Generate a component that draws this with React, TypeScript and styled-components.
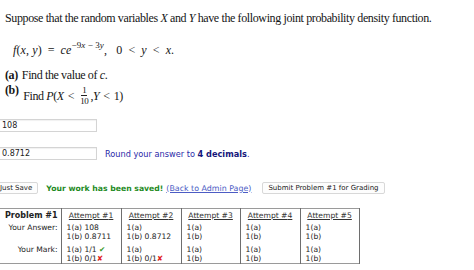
import React from 'react';
import styled, { createGlobalStyle } from 'styled-components';

const Global = createGlobalStyle`
  html, body { margin: 0; padding: 0; background: #fff; }
  body { width: 474px; height: 270px; overflow: hidden; }
`;

const Page = styled.div`
  width: 474px;
  height: 270px;
  overflow: hidden;
  color: #151515;
  font-family: "Liberation Serif", "Times New Roman", serif;
`;

const Para = styled.div<{ $top: number; $left?: number; $ls?: number }>`
  margin-top: ${(p) => p.$top}px;
  padding-left: ${(p) => p.$left ?? 5}px;
  height: 16px;
  font-size: 12px;
  line-height: 16px;
  letter-spacing: ${(p) => p.$ls ?? -0.38}px;
  white-space: nowrap;
`;

const V = styled.i`
  font-style: italic;
`;

const Sup = styled.sup`
  font-size: 9px;
  vertical-align: 6px;
  line-height: 0;
`;

const Op = styled.span<{ $pad?: number }>`
  padding: 0 ${(p) => p.$pad ?? 5}px;
`;

const Part = styled.b<{ $raise?: boolean }>`
  font-weight: bold;
  vertical-align: ${(p) => (p.$raise ? '6px' : 'baseline')};
  margin-right: ${(p) => (p.$raise ? 2 : 4)}px;
`;

const Frac = styled.span`
  display: inline-flex;
  flex-direction: column;
  align-items: center;
  vertical-align: 7px;
  font-size: 9px;
  line-height: 8px;
  margin: 0 2px;
`;

const Num = styled.span`
  border-bottom: 1px solid #222;
  padding: 0 1px 1px;
`;

const Den = styled.span`
  padding-top: 1px;
`;

const FieldRow = styled.div<{ $top: number }>`
  margin-top: ${(p) => p.$top}px;
  display: flex;
  align-items: center;
  height: 13px;
  font-family: "DejaVu Sans", Verdana, sans-serif;
  font-size: 8px;
`;

const Field = styled.div`
  box-sizing: border-box;
  width: 97px;
  height: 13px;
  border: 1px solid #d4d4d4;
  border-left: none;
  background: #fff;
  color: #222;
  padding-left: 2px;
  display: flex;
  align-items: center;
  box-shadow: inset 0 1px 1px rgba(0,0,0,0.06);
`;

const Hint = styled.span`
  margin-left: 8px;
  font-size: 8.2px;
  color: #2a2aa8;
  & b { color: #15157a; }
`;

const Actions = styled.div`
  margin-top: 22px;
  margin-left: -6px;
  display: flex;
  align-items: center;
  height: 12px;
  font-family: "DejaVu Sans", Verdana, sans-serif;
  font-size: 7.7px;
  white-space: nowrap;
`;

const Btn = styled.span<{ $ml?: number }>`
  box-sizing: border-box;
  height: 12px;
  display: inline-flex;
  align-items: center;
  padding: 0 5px;
  margin-left: ${(p) => p.$ml ?? 0}px;
  border: 1px solid #d8d8d8;
  border-radius: 2px;
  background: #fdfdfd;
  color: #222;
  font-size: 7px;
`;

const Saved = styled.b`
  margin-left: 8px;
  color: #1e8a1e;
  font-weight: bold;
`;

const Back = styled.span`
  margin-left: 3px;
  font-size: 7.9px;
  color: #4c5cc4;
  text-decoration: underline;
`;

const Table = styled.table`
  margin-top: 14px;
  margin-left: -1px;
  border-collapse: collapse;
  font-family: "DejaVu Sans", Verdana, sans-serif;
  font-size: 7.6px;
  line-height: 9px;
  color: #222;
  border-top: 1px solid #9a9a9a;
  border-bottom: 1px solid #9a9a9a;
`;

const Th = styled.th<{ $w: number }>`
  width: ${(p) => p.$w}px;
  box-sizing: border-box;
  padding: 2px 3px 2px;
  border-left: 1px solid #6e6e6e;
  border-right: 1px solid #6e6e6e;
  font-weight: normal;
  text-align: center;
  white-space: nowrap;
  &:first-child { font-weight: bold; text-align: left; padding-left: 5px; font-size: 8px; }
`;

const HeadLink = styled.span`
  text-decoration: underline;
  color: #333;
`;

const Row = styled.tr<{ $pt: number; $pb: number }>`
  & > td {
    padding-top: ${(p) => p.$pt}px;
    padding-bottom: ${(p) => p.$pb}px;
  }
`;

const Label = styled.td`
  text-align: right;
  vertical-align: top;
  padding-left: 2px;
  padding-right: 3px;
  border-left: 1px solid #6e6e6e;
  border-right: 1px solid #6e6e6e;
  white-space: nowrap;
`;

const Td = styled.td`
  vertical-align: top;
  padding-left: 5px;
  padding-right: 3px;
  border-left: 1px solid #6e6e6e;
  border-right: 1px solid #6e6e6e;
  white-space: nowrap;
`;

const Ok = styled.span`
  color: #3a9a2a;
  font-weight: bold;
`;

const Bad = styled.span`
  color: #e02020;
  font-weight: bold;
`;

const attempts = [
  { n: 1, a: '108', b: '0.8711', ma: '1/1', mb: '0/1', okA: true, badB: true },
  { n: 2, a: '', b: '0.8712', ma: '', mb: '0/1', okA: false, badB: true },
  { n: 3, a: '', b: '', ma: '', mb: '', okA: false, badB: false },
  { n: 4, a: '', b: '', ma: '', mb: '', okA: false, badB: false },
  { n: 5, a: '', b: '', ma: '', mb: '', okA: false, badB: false },
];
const widths = [57, 60, 60, 59, 60, 59];

export default function App() {
  return (
    <Page>
      <Global />
      <Para $top={10}>
        Suppose that the random variables <V>X</V> and <V>Y</V> have the following joint probability density function.
      </Para>
      <Para $top={16} $left={13} $ls={0.1}>
        <V>f</V>(<V>x</V>, <V>y</V>)<Op $pad={6}>=</Op><V>ce</V>
        <Sup>−9<V>x</V> − 3<V>y</V></Sup>,&nbsp;&nbsp; 0<Op $pad={6}>&lt;</Op><V>y</V><Op $pad={6}>&lt;</Op><V>x</V>.
      </Para>
      <Para $top={9}>
        <Part>(a)</Part>Find the value of <V>c</V>.
      </Para>
      <Para $top={-1}>
        <Part $raise>(b)</Part> Find <V>P</V>(<V>X</V><Op $pad={4}>&lt;</Op>
        <Frac>
          <Num>1</Num>
          <Den>10</Den>
        </Frac>
        ,<V>Y</V><Op $pad={4}>&lt;</Op>1)
      </Para>
      <FieldRow $top={21}>
        <Field>108</Field>
      </FieldRow>
      <FieldRow $top={15}>
        <Field>0.8712</Field>
        <Hint>
          Round your answer to <b>4 decimals</b>.
        </Hint>
      </FieldRow>
      <Actions>
        <Btn>Just Save</Btn>
        <Saved>Your work has been saved!</Saved>
        <Back>(Back to Admin Page)</Back>
        <Btn $ml={11}>Submit Problem #1 for Grading</Btn>
      </Actions>
      <Table>
        <thead>
          <tr>
            <Th $w={widths[0]}>Problem #1</Th>
            {attempts.map((t, i) => (
              <Th key={t.n} $w={widths[i + 1]}>
                <HeadLink>Attempt #{t.n}</HeadLink>
              </Th>
            ))}
          </tr>
        </thead>
        <tbody>
          <Row $pt={1} $pb={2}>
            <Label>Your Answer:</Label>
            {attempts.map((t) => (
              <Td key={t.n}>
                1(a){t.a ? ` ${t.a}` : ''}
                <br />
                1(b){t.b ? ` ${t.b}` : ''}
              </Td>
            ))}
          </Row>
          <Row $pt={2} $pb={0}>
            <Label>Your Mark:</Label>
            {attempts.map((t) => (
              <Td key={t.n}>
                1(a){t.ma ? ` ${t.ma} ` : ''}
                {t.okA && <Ok>✔</Ok>}
                <br />
                1(b){t.mb ? ` ${t.mb}` : ''}
                {t.badB && <Bad>✘</Bad>}
              </Td>
            ))}
          </Row>
        </tbody>
      </Table>
    </Page>
  );
}
